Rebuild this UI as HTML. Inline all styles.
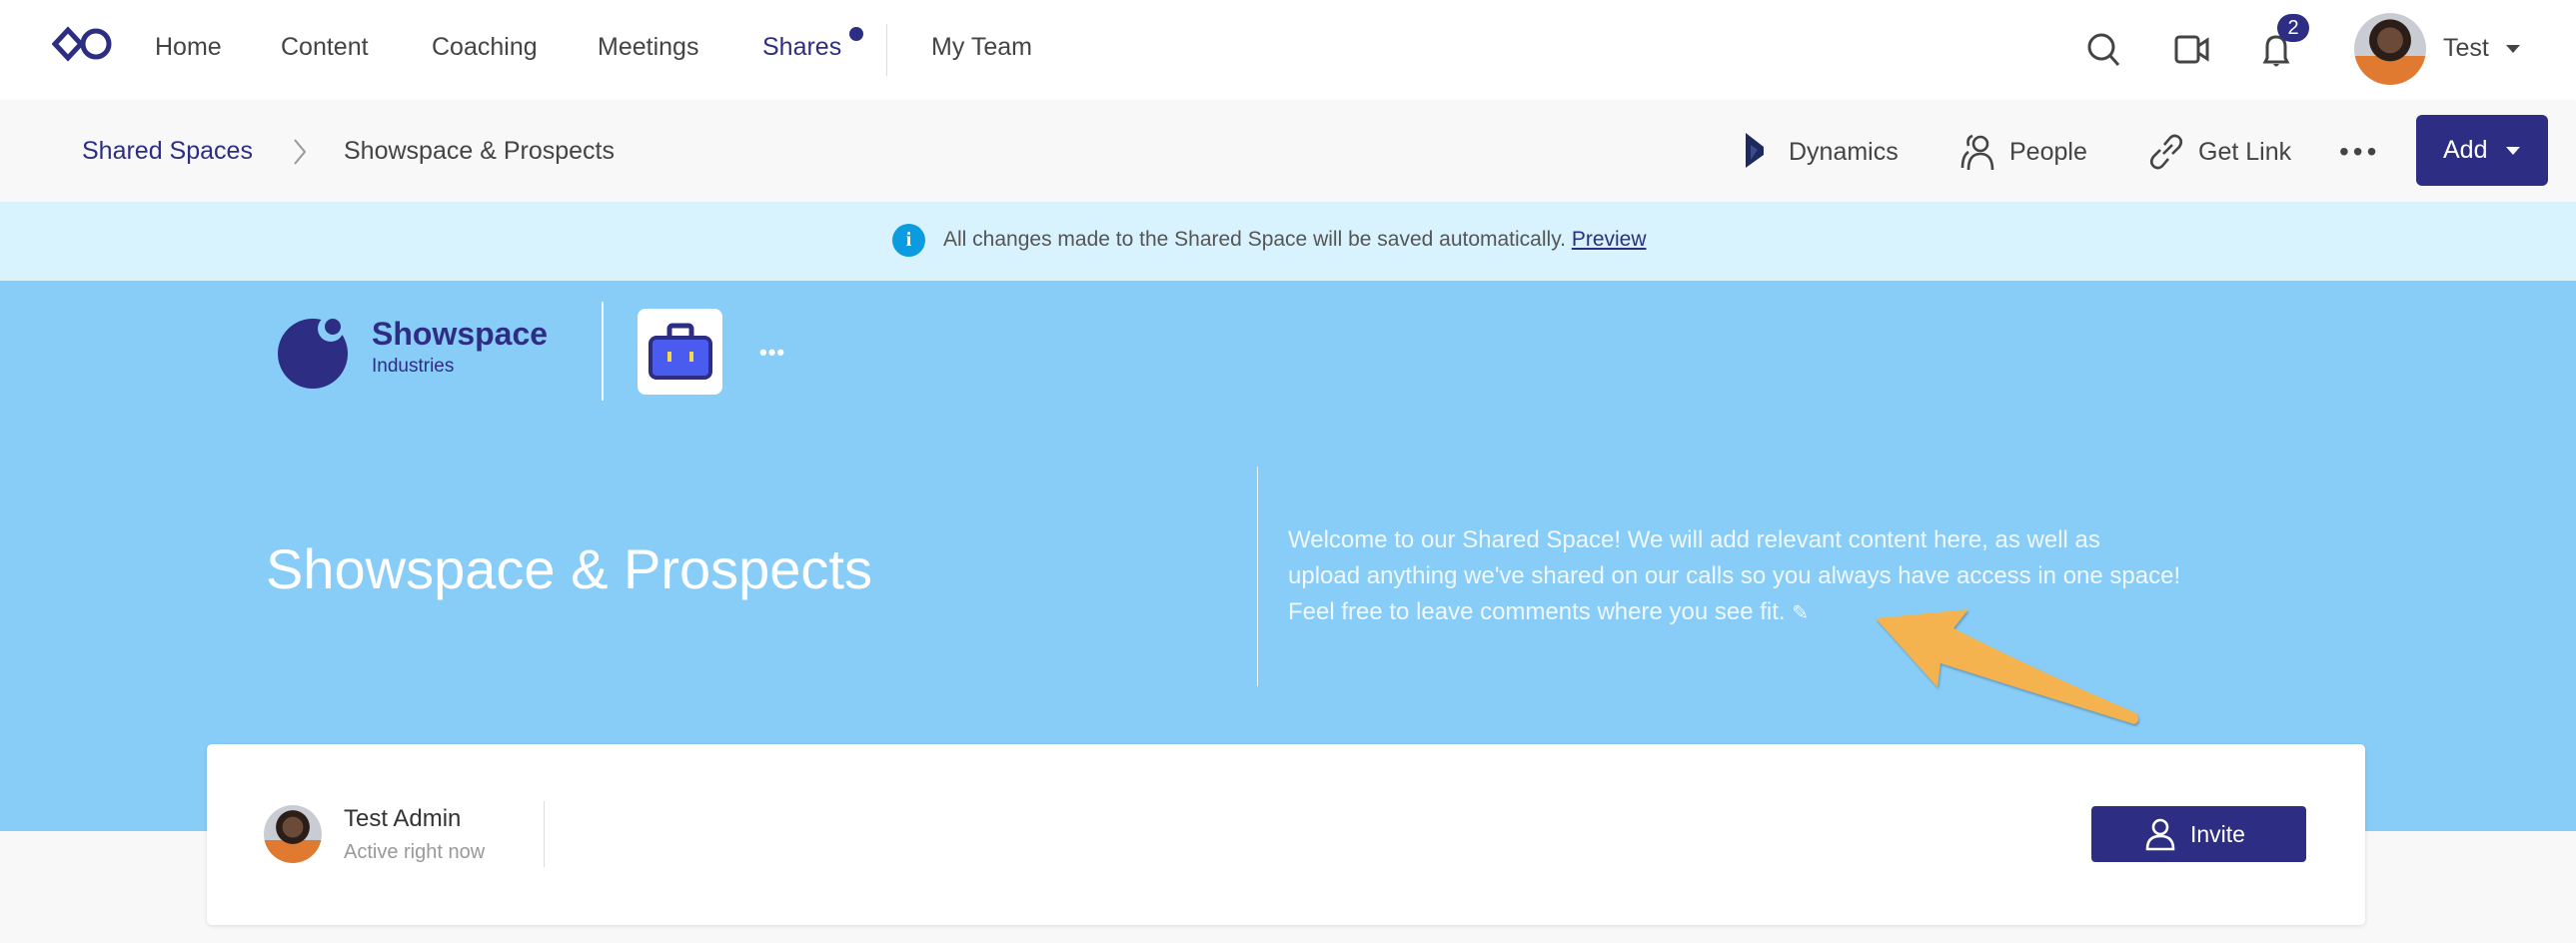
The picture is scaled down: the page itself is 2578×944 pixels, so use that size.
<!DOCTYPE html>
<html><head><meta charset="utf-8"><style>
*{margin:0;padding:0;box-sizing:border-box}
body{width:2578px;height:944px;overflow:hidden;background:#f8f8f8;font-family:"Liberation Sans",sans-serif;position:relative}
.a{position:absolute;white-space:nowrap}
.nav{font-size:25px;color:#444;top:33px}
</style></head><body>
<div class="a" style="left:0;top:0;width:2578px;height:100px;background:#fff"></div>
<svg class="a" style="left:52px;top:26px" width="66" height="36" viewBox="0 0 66 36"><path d="M29 18 L16 4 L3 18 L16 32 Z" fill="none" stroke="#2d2e83" stroke-width="5" stroke-linejoin="miter"/><circle cx="44" cy="18" r="13" fill="none" stroke="#2d2e83" stroke-width="5"/></svg>
<div class="a nav" style="left:155px">Home</div>
<div class="a nav" style="left:281px">Content</div>
<div class="a nav" style="left:432px">Coaching</div>
<div class="a nav" style="left:598px">Meetings</div>
<div class="a nav" style="left:763px;color:#2d2e83">Shares</div>
<div class="a" style="left:850px;top:27px;width:14px;height:14px;border-radius:50%;background:#2d2e83"></div>
<div class="a" style="left:887px;top:24px;width:1px;height:52px;background:#ddd"></div>
<div class="a nav" style="left:932px">My Team</div>
<svg class="a" style="left:2086px;top:30px" width="40" height="40" viewBox="0 0 40 40"><circle cx="17" cy="17" r="12" fill="none" stroke="#444" stroke-width="3"/><path d="M26 26 L34 35" stroke="#444" stroke-width="3"/></svg>
<svg class="a" style="left:2176px;top:34px" width="38" height="32" viewBox="0 0 38 32"><rect x="2" y="3" width="22" height="25" rx="3" fill="none" stroke="#444" stroke-width="3"/><path d="M24 12 L33 6 V25 L24 19" fill="none" stroke="#444" stroke-width="3"/></svg>
<svg class="a" style="left:2262px;top:30px" width="32" height="40" viewBox="0 0 32 40"><path d="M5 32 H27 L25 28 V17 Q25 7 16 7 Q7 7 7 17 V28 Z" fill="none" stroke="#444" stroke-width="3"/><path d="M13 34 Q16 39 19 34" fill="#444"/></svg>
<div class="a" style="left:2279px;top:14px;width:32px;height:28px;border-radius:14px;background:#2d2e83;color:#fff;font-size:20px;text-align:center;line-height:28px">2</div>
<div class="a" style="left:2356px;top:13px;width:72px;height:72px;border-radius:50%;background:radial-gradient(circle at 50% 38%,#6b4a3a 0 22%,#2b1d18 23% 36%,transparent 37%),linear-gradient(180deg,#c9ccd3 0 60%,#e07a30 60%)"></div>
<div class="a" style="left:2445px;top:34px;font-size:25px;color:#444">Test</div>
<div class="a" style="left:2508px;top:45px;border:7px solid transparent;border-top:8px solid #444"></div>

<div class="a" style="left:0;top:100px;width:2578px;height:102px;background:#f8f8f8;box-shadow:0 2px 3px rgba(0,0,0,.3)"></div>
<div class="a" style="left:82px;top:137px;font-size:25px;color:#2d2e83">Shared Spaces</div>
<svg class="a" style="left:292px;top:138px" width="16" height="28"><path d="M3 2 L13 14 L3 26" fill="none" stroke="#999" stroke-width="2"/></svg>
<div class="a" style="left:344px;top:137px;font-size:25px;color:#444">Showspace &amp; Prospects</div>
<svg class="a" style="left:1745px;top:133px" width="22" height="36" viewBox="0 0 22 36"><path d="M2 0 L20 14 L20 22 L2 35 Z" fill="#1c2a5c"/><path d="M7 12 L14 17 L7 27 Z" fill="#3a4a8c"/></svg>
<div class="a" style="left:1790px;top:138px;font-size:25px;color:#444">Dynamics</div>
<svg class="a" style="left:1960px;top:132px" width="40" height="40" viewBox="0 0 40 40"><circle cx="22" cy="12" r="7" fill="none" stroke="#444" stroke-width="2.6"/><path d="M10 38 Q10 22 22 22 Q34 22 34 38" fill="none" stroke="#444" stroke-width="2.6"/><path d="M14 4 Q8 6 10 14 M4 36 Q4 24 10 20" fill="none" stroke="#444" stroke-width="2.6"/></svg>
<div class="a" style="left:2011px;top:138px;font-size:25px;color:#444">People</div>
<svg class="a" style="left:2148px;top:132px" width="40" height="40" viewBox="0 0 40 40"><path d="M17 22 L26 13 M14 18 L7 25 Q3 31 8 35 Q13 38 17 33 L22 27 M26 22 L33 15 Q37 9 32 5 Q27 2 23 7 L18 13" fill="none" stroke="#444" stroke-width="2.6"/></svg>
<div class="a" style="left:2200px;top:138px;font-size:25px;color:#444">Get Link</div>
<div class="a" style="left:2341px;top:142px;font-size:28px;color:#444;letter-spacing:4px;line-height:20px">•••</div>
<div class="a" style="left:2418px;top:115px;width:132px;height:71px;border-radius:6px;background:#2d2e83"></div>
<div class="a" style="left:2445px;top:136px;font-size:25px;color:#fff">Add</div>
<div class="a" style="left:2508px;top:147px;border:7px solid transparent;border-top:8px solid #fff"></div>

<div class="a" style="left:0;top:202px;width:2578px;height:79px;background:#d8f3fd"></div>
<div class="a" style="left:893px;top:224px;width:33px;height:33px;border-radius:50%;background:#0b9be0;color:#fff;font-size:20px;font-weight:bold;text-align:center;line-height:33px;font-family:'Liberation Serif',serif">i</div>
<div class="a" style="left:944px;top:228px;font-size:21px;color:#555">All changes made to the Shared Space will be saved automatically. <span style="color:#2d2e83;text-decoration:underline">Preview</span></div>

<div class="a" style="left:0;top:281px;width:2578px;height:551px;background:#88cdf8"></div>
<svg class="a" style="left:275px;top:314px" width="76" height="76" viewBox="0 0 76 76"><circle cx="38" cy="40" r="35" fill="#2d2e83"/><circle cx="56" cy="15" r="13" fill="#88cdf8"/><circle cx="58" cy="13" r="8" fill="#2d2e83"/></svg>
<div class="a" style="left:372px;top:316px;font-size:32px;font-weight:bold;color:#2d2e83">Showspace</div>
<div class="a" style="left:372px;top:356px;font-size:19px;color:#2d2e83">Industries</div>
<div class="a" style="left:602px;top:302px;width:2px;height:99px;background:#e8f5fd"></div>
<div class="a" style="left:638px;top:309px;width:85px;height:86px;border-radius:8px;background:#fff"></div>
<svg class="a" style="left:648px;top:322px" width="66" height="60" viewBox="0 0 66 60"><rect x="22" y="4" width="22" height="14" rx="3" fill="none" stroke="#2d2e83" stroke-width="5"/><rect x="3" y="16" width="60" height="40" rx="6" fill="#4a5cf0" stroke="#2d2e83" stroke-width="4"/><rect x="20" y="30" width="4" height="10" fill="#f6d84a"/><rect x="42" y="30" width="4" height="10" fill="#f6d84a"/></svg>
<div class="a" style="left:760px;top:340px;font-size:22px;color:#fff;letter-spacing:1px;font-weight:bold">•••</div>
<div class="a" style="left:266px;top:537px;font-size:56px;color:#fff;font-weight:300">Showspace &amp; Prospects</div>
<div class="a" style="left:1258px;top:467px;width:1px;height:220px;background:#e6f4fd"></div>
<div class="a" style="left:1289px;top:523px;font-size:24px;line-height:36px;color:#f0f8fe">Welcome to our Shared Space! We will add relevant content here, as well as<br>upload anything we've shared on our calls so you always have access in one space!<br>Feel free to leave comments where you see fit. <span style="font-size:20px">✎</span></div>
<svg class="a" style="left:0;top:0" width="2578" height="944"><path d="M1877 619 L1970 610 L1955 629 Q2040 672 2138 714 Q2143 722 2136 725 Q2030 692 1942 664 L1939 688 Z" fill="#f4b34e" style="filter:drop-shadow(1px 2px 1px rgba(0,0,0,.25))"/></svg>

<div class="a" style="left:207px;top:745px;width:2160px;height:181px;background:#fff;border-radius:5px;box-shadow:0 1px 4px rgba(0,0,0,.12)"></div>
<div class="a" style="left:264px;top:806px;width:58px;height:58px;border-radius:50%;background:radial-gradient(circle at 50% 38%,#6b4a3a 0 22%,#2b1d18 23% 36%,transparent 37%),linear-gradient(180deg,#c9ccd3 0 60%,#e07a30 60%)"></div>
<div class="a" style="left:344px;top:806px;font-size:24px;color:#333">Test Admin</div>
<div class="a" style="left:344px;top:842px;font-size:20px;color:#999">Active right now</div>
<div class="a" style="left:544px;top:802px;width:1px;height:66px;background:#ddd"></div>
<div class="a" style="left:2093px;top:807px;width:215px;height:56px;border-radius:4px;background:#2d2e83"></div>
<svg class="a" style="left:2146px;top:818px" width="32" height="34" viewBox="0 0 32 34"><circle cx="16" cy="10" r="7" fill="none" stroke="#fff" stroke-width="2.6"/><path d="M3 32 Q3 19 16 19 Q29 19 29 32 Z" fill="none" stroke="#fff" stroke-width="2.6"/></svg>
<div class="a" style="left:2192px;top:822px;font-size:23px;color:#fff">Invite</div>
</body></html>
